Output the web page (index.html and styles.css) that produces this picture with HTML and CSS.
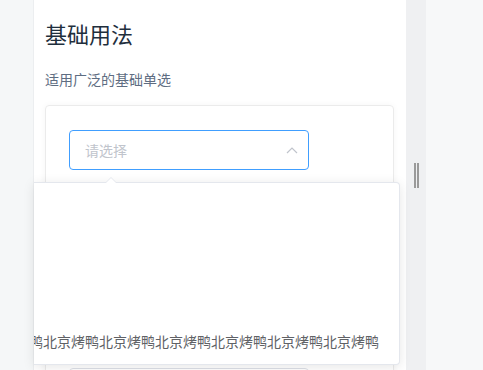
FILE: index.html
```html
<!DOCTYPE html>
<html lang="zh">
<head>
<meta charset="utf-8">
<link rel="stylesheet" href="styles.css">
</head>
<body>
<div class="page">
  <div class="gutter"></div>
  <main class="panel">
    <h3 class="title">基础用法</h3>
    <p class="desc">适用广泛的基础单选</p>
    <div class="demo">
      <div class="select">
        <span class="placeholder">请选择</span>
        <svg class="chevron" width="12" height="8" viewBox="0 0 12 8"><path d="M1 7 L6 2 L11 7" fill="none" stroke="#c0c4cc" stroke-width="1.2"/></svg>
      </div>
      <div class="select second"></div>
    </div>
  </main>
  <div class="strip"><span class="handle"></span></div>
  <div class="rest"></div>
</div>
<div class="popper">
  <span class="arrow"></span>
  <div class="option"><span>北京烤鸭北京烤鸭北京烤鸭北京烤鸭北京烤鸭北京烤鸭北京烤鸭</span></div>
</div>
</body>
</html>
```
FILE: styles.css
```css
html, body {
  margin: 0;
  height: 100%;
  overflow: hidden;
  font-family: "Noto Sans CJK SC", "Noto Sans", sans-serif;
}
.page {
  display: flex;
  height: 370px;
  overflow: hidden;
}
.gutter {
  width: 34px;
  flex: none;
  background: #f5f7f8;
  box-shadow: inset -1px 0 0 #eceef0;
}
.panel {
  width: 361px;
  flex: none;
  background: #fff;
  padding: 0 0 0 11px;
  overflow: hidden;
}
.title {
  margin: 17px 0 0;
  font-size: 22px;
  line-height: 33px;
  font-weight: 400;
  color: #1f2f3d;
}
.desc {
  margin: 19px 0 0;
  font-size: 14px;
  line-height: 21px;
  color: #5e6d82;
}
.demo {
  margin-top: 15px;
  width: 349px;
  height: 280px;
  border: 1px solid #ebebeb;
  border-radius: 4px;
  padding: 24px 0 0 23px;
  box-sizing: border-box;
  box-shadow: 0 0 6px rgba(0,0,0,0.04);
}
.select {
  width: 240px;
  height: 40px;
  box-sizing: border-box;
  border: 1px solid #409eff;
  border-radius: 4px;
  display: flex;
  align-items: center;
  padding: 0 10px 0 15px;
}
.select.second {
  margin-top: 198px;
  border-color: #dcdfe6;
}
.placeholder {
  flex: 1;
  font-size: 14px;
  color: #c0c4cc;
}
.strip {
  width: 20px;
  flex: none;
  background: #eff0f2;
  display: flex;
  justify-content: center;
  padding-top: 163px;
  box-sizing: border-box;
}
.handle {
  width: 5px;
  height: 25px;
  border-left: 2px solid #9a9a9a;
  border-right: 2px solid #9a9a9a;
  box-sizing: border-box;
  margin-left: 1px;
}
.rest {
  flex: 1;
  background: #f7f8f9;
}
.popper {
  position: absolute;
  left: 34px;
  top: 182px;
  width: 366px;
  height: 183px;
  box-sizing: border-box;
  background: #fff;
  border: 1px solid #e4e7ed;
  border-left: none;
  border-radius: 0 4px 4px 0;
  box-shadow: 0 2px 12px rgba(0,0,0,0.1);
  display: flex;
  flex-direction: column;
  justify-content: flex-end;
  padding: 0 20px 13px 0;
}
.arrow {
  position: absolute;
  left: 71px;
  top: -6px;
  width: 0;
  height: 0;
  border-left: 6px solid transparent;
  border-right: 6px solid transparent;
  border-bottom: 6px solid #e4e7ed;
}
.arrow::after {
  content: "";
  position: absolute;
  left: -6px;
  top: 1px;
  border-left: 6px solid transparent;
  border-right: 6px solid transparent;
  border-bottom: 6px solid #fff;
}
.option {
  display: flex;
  justify-content: flex-end;
  overflow: hidden;
  white-space: nowrap;
  font-size: 14px;
  line-height: 20px;
  color: #606266;
}
.option span {
  flex: none;
}
```
